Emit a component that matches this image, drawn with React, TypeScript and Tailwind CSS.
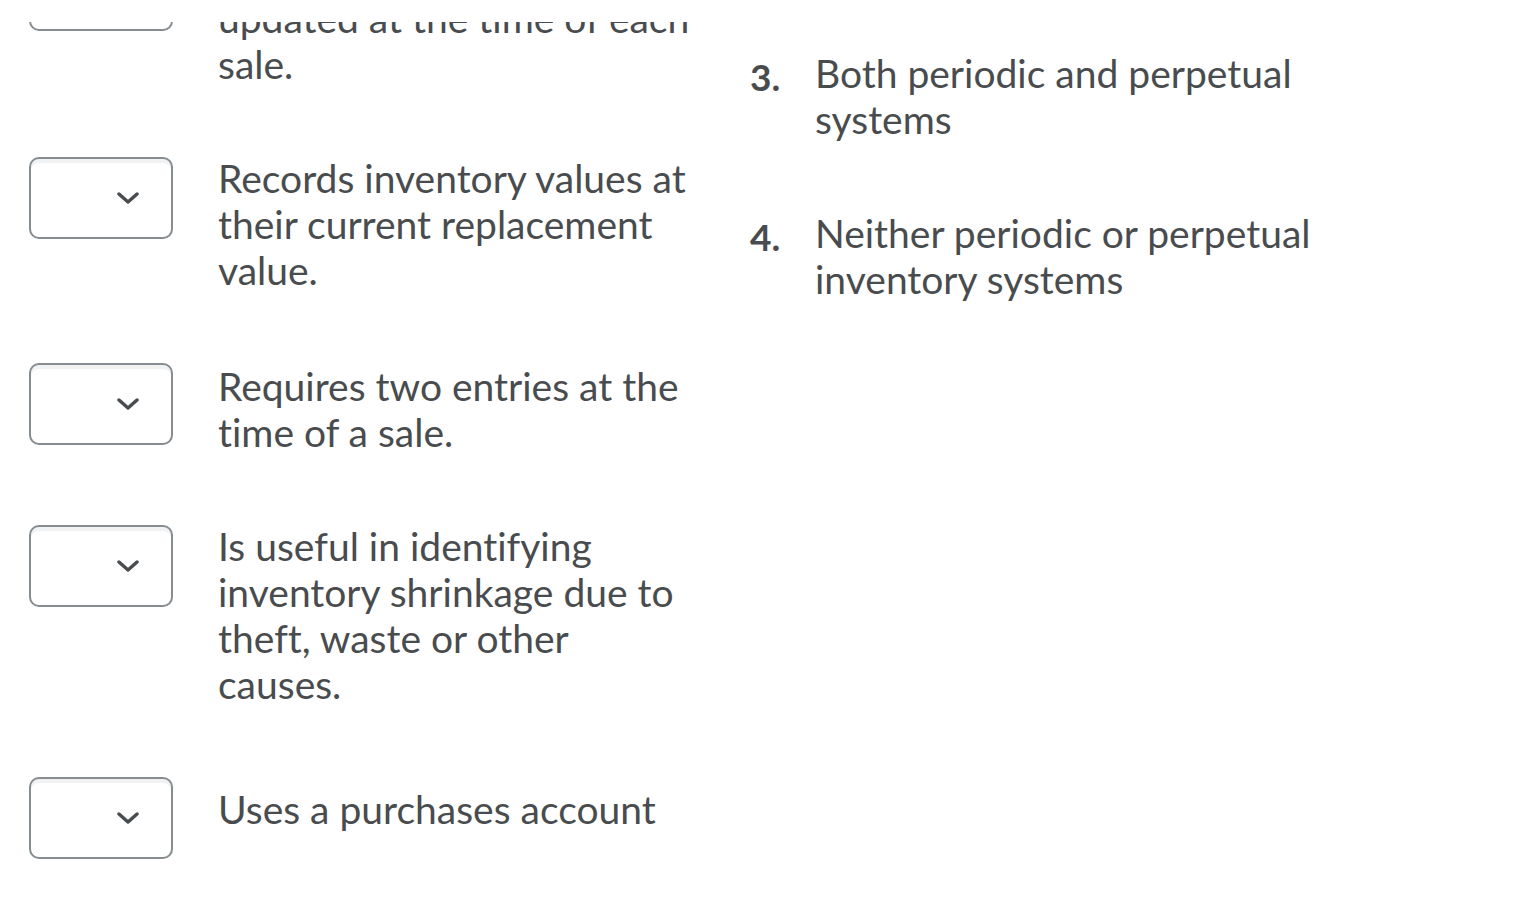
import React from "react";

const rows = [
  {
    lines: ["Inventory account balance is", "updated at the time of each", "sale."],
    rowMt: "mt-0",
    textMt: "mt-0",
  },
  {
    lines: ["Records inventory values at", "their current replacement", "value."],
    rowMt: "mt-[70px]",
    textMt: "-mt-[2px]",
  },
  {
    lines: ["Requires two entries at the", "time of a sale."],
    rowMt: "mt-[70px]",
    textMt: "mt-0",
  },
  {
    lines: ["Is useful in identifying", "inventory shrinkage due to", "theft, waste or other", "causes."],
    rowMt: "mt-[70px]",
    textMt: "-mt-[2px]",
  },
  {
    lines: ["Uses a purchases account"],
    rowMt: "mt-[70px]",
    textMt: "mt-[9px]",
  },
];

const answers = [
  { n: "3.", text: "Both periodic and perpetual systems" },
  { n: "4.", text: "Neither periodic or perpetual inventory systems" },
];

function SelectBox() {
  return (
    <div className="flex h-[82px] w-[144px] shrink-0 items-center justify-end rounded-[10px] border-2 border-[#868c8f] bg-white pr-[32px] shadow-[inset_0_4px_0_0_rgba(181,189,194,0.2)]">
      <svg width="22" height="12" viewBox="0 0 22 12" fill="none">
        <path
          d="M2 2l9 8 9-8"
          stroke="#494c4e"
          strokeWidth="3.4"
          strokeLinecap="round"
          strokeLinejoin="round"
        />
      </svg>
    </div>
  );
}

export default function App() {
  return (
    <div className="relative min-h-screen overflow-hidden bg-white font-['Lato',sans-serif] text-[39px] leading-[46px] text-[#494c4e] [font-variant-ligatures:none]">
      <div className="absolute inset-x-0 top-0 z-10 h-[22px] bg-white" />

      <div className="-mt-[51px] flex">
        <div className="w-[720px] shrink-0 pl-[29px]">
          {rows.map((row, i) => (
            <div key={i} className={`flex items-start ${row.rowMt}`}>
              <SelectBox />
              <p className={`ml-[45px] w-[490px] ${row.textMt}`}>
                {row.lines.map((l, j) => (
                  <React.Fragment key={j}>
                    {l}
                    {j < row.lines.length - 1 && <br />}
                  </React.Fragment>
                ))}
              </p>
            </div>
          ))}
        </div>

        <div className="mt-[101px] pl-[30px]">
          {answers.map((a, i) => (
            <div key={a.n} className={`flex items-start ${i > 0 ? "mt-[68px]" : ""}`}>
              <span className="w-[65px] shrink-0 pt-[4px] text-[37px] font-bold">{a.n}</span>
              <p className="w-[560px]">{a.text}</p>
            </div>
          ))}
        </div>
      </div>
    </div>
  );
}
